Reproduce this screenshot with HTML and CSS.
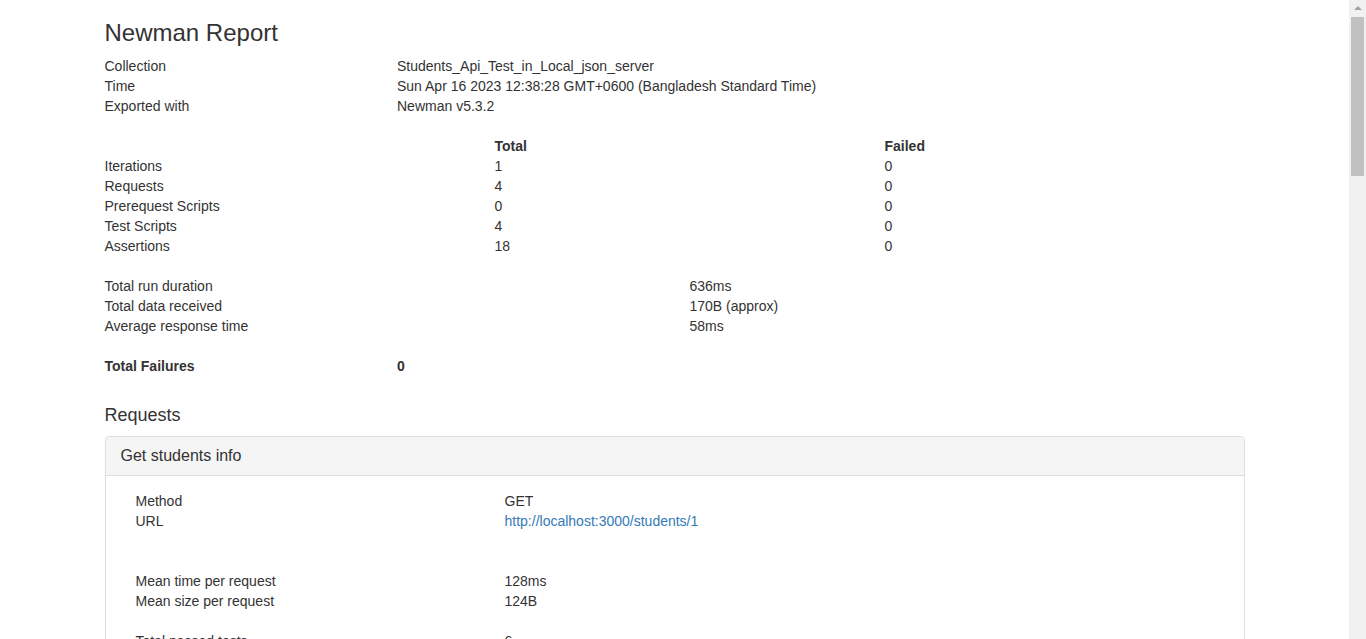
FILE: index.html
```html
<!DOCTYPE html>
<html lang="en">
<head>
<meta charset="utf-8">
<title>Newman Report</title>
<link rel="stylesheet" href="styles.css">
</head>
<body>
<div class="page">
<div class="container">
  <h3 class="title">Newman Report</h3>

  <div class="kv">
    <div>Collection</div><div>Students_Api_Test_in_Local_json_server</div>
    <div>Time</div><div>Sun Apr 16 2023 12:38:28 GMT+0600 (Bangladesh Standard Time)</div>
    <div>Exported with</div><div>Newman v5.3.2</div>
  </div>

  <div class="stats">
    <div></div><div class="b">Total</div><div class="b">Failed</div>
    <div>Iterations</div><div>1</div><div>0</div>
    <div>Requests</div><div>4</div><div>0</div>
    <div>Prerequest Scripts</div><div>0</div><div>0</div>
    <div>Test Scripts</div><div>4</div><div>0</div>
    <div>Assertions</div><div>18</div><div>0</div>
  </div>

  <div class="summary">
    <div>Total run duration</div><div>636ms</div>
    <div>Total data received</div><div>170B (approx)</div>
    <div>Average response time</div><div>58ms</div>
  </div>

  <div class="kv failures">
    <div>Total Failures</div><div>0</div>
  </div>

  <h4 class="section">Requests</h4>

  <div class="panel">
    <div class="panel-heading"><h4 class="panel-title">Get students info</h4></div>
    <div class="panel-body">
      <div class="pkv">
        <div>Method</div><div>GET</div>
        <div>URL</div><div><a href="#">http://localhost:3000/students/1</a></div>
      </div>
      <div class="pkv gap2">
        <div>Mean time per request</div><div>128ms</div>
        <div>Mean size per request</div><div>124B</div>
      </div>
      <div class="pkv gap1">
        <div>Total passed tests</div><div>6</div>
        <div>Total failed tests</div><div>0</div>
      </div>
      <div class="pkv gap1">
        <div>Status code</div><div>200</div>
      </div>
    </div>
  </div>

  <div class="panel">
    <div class="panel-heading"><h4 class="panel-title">Create new student</h4></div>
    <div class="panel-body">
      <div class="pkv">
        <div>Method</div><div>POST</div>
        <div>URL</div><div><a href="#">http://localhost:3000/students</a></div>
      </div>
      <div class="pkv gap2">
        <div>Mean time per request</div><div>31ms</div>
        <div>Mean size per request</div><div>130B</div>
      </div>
    </div>
  </div>
</div>
</div>
<div class="scrollbar" aria-hidden="true">
  <div class="sb-arrow"></div>
  <div class="sb-thumb"></div>
</div>
</body>
</html>
```

FILE: styles.css
```css
html, body {
  margin: 0;
  padding: 0;
}
body {
  font-family: "Liberation Sans", Arial, Helvetica, sans-serif;
  font-size: 14px;
  line-height: 20px;
  color: #333;
  background: #fff;
}
.page {
  padding-right: 17px;
}
.container {
  width: 1140px;
  margin: 0 auto;
  padding: 0 15px;
}
.title {
  font-size: 24px;
  font-weight: 500;
  line-height: 26.4px;
  margin: 20px 0 10px;
}
.kv {
  display: grid;
  grid-template-columns: 292.5px 1fr;
}
.stats {
  display: grid;
  grid-template-columns: 390px 390px 1fr;
  margin-top: 20px;
}
.b {
  font-weight: bold;
}
.summary {
  display: grid;
  grid-template-columns: 585px 1fr;
  margin-top: 20px;
}
.failures {
  margin-top: 20px;
  font-weight: bold;
}
.section {
  font-size: 18px;
  font-weight: 500;
  line-height: 19.8px;
  margin: 30px 0 10px;
}
.panel {
  border: 1px solid #ddd;
  border-radius: 4px;
  margin-bottom: 20px;
  box-shadow: 0 1px 1px rgba(0,0,0,.05);
}
.panel-heading {
  background: #f5f5f5;
  border-bottom: 1px solid #ddd;
  border-radius: 3px 3px 0 0;
  padding: 10px 15px;
}
.panel-title {
  margin: 0;
  font-size: 16px;
  font-weight: 500;
  line-height: 17.6px;
}
.panel-body {
  padding: 15px 30px;
}
.pkv {
  display: grid;
  grid-template-columns: 369px 1fr;
}
.gap2 {
  margin-top: 40px;
}
.gap1 {
  margin-top: 20px;
}
a {
  color: #337ab7;
  text-decoration: none;
}
.scrollbar {
  position: fixed;
  top: 0;
  right: 0;
  bottom: 0;
  width: 17px;
  background: #f1f1f1;
  display: flex;
  flex-direction: column;
  align-items: center;
}
.sb-arrow {
  margin-top: 6px;
  width: 0;
  height: 0;
  border-left: 4px solid transparent;
  border-right: 4px solid transparent;
  border-bottom: 4px solid #a3a3a3;
}
.sb-thumb {
  margin-top: 7px;
  width: 13px;
  height: 159px;
  background: #c1c1c1;
}
```
